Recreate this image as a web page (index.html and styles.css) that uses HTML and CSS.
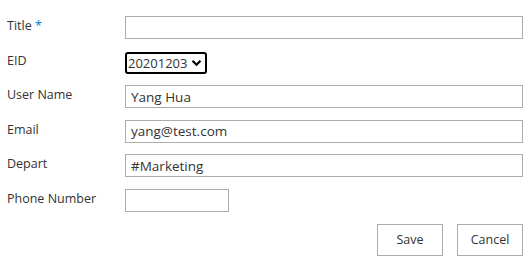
FILE: index.html
```html
<!DOCTYPE html>
<html lang="en">
<head>
    <meta charset="UTF-8">
    <meta name="viewport" content="width=device-width, initial-scale=1.0">
    <title>New Item</title>
    <link rel="stylesheet" href="styles.css">
</head>
<body>
    <form class="item-form">
        <div class="form-row">
            <label class="form-label">Title <span class="required">*</span></label>
            <input class="text-field" type="text" value="">
        </div>
        <div class="form-row">
            <label class="form-label">EID</label>
            <div class="select-box">
                <span>20201203</span>
                <svg class="chevron" width="11" height="8" viewBox="0 0 11 8">
                    <path d="M1.5 1.8 L5.5 5.8 L9.5 1.8" fill="none" stroke="#000" stroke-width="2.2"/>
                </svg>
            </div>
        </div>
        <div class="form-row">
            <label class="form-label">User Name</label>
            <input class="text-field" type="text" value="Yang Hua">
        </div>
        <div class="form-row">
            <label class="form-label">Email</label>
            <input class="text-field" type="text" value="yang@test.com">
        </div>
        <div class="form-row">
            <label class="form-label">Depart</label>
            <input class="text-field" type="text" value="#Marketing">
        </div>
        <div class="form-row">
            <label class="form-label">Phone Number</label>
            <input class="text-field short" type="text" value="">
        </div>
        <div class="form-actions">
            <button type="button" class="action-btn">Save</button>
            <button type="button" class="action-btn">Cancel</button>
        </div>
    </form>
</body>
</html>
```

FILE: styles.css
```css
body {
    margin: 0;
    font-family: "Open Sans", "Noto Sans", sans-serif;
    font-size: 12.5px;
    color: #333;
    background: #fff;
}
.item-form {
    width: 523px;
    padding: 16px 0 0 7px;
    box-sizing: border-box;
}
.form-row {
    display: flex;
    align-items: flex-start;
    height: 23px;
    margin-bottom: 11.6px;
}
.form-label {
    width: 118px;
    flex-shrink: 0;
    line-height: 18px;
    padding-top: 1px;
}
.required {
    color: #0078d4;
}
.text-field {
    flex: 1;
    height: 23px;
    box-sizing: border-box;
    margin: 0;
    padding: 0 5px;
    border: 1px solid #ababab;
    border-radius: 0;
    font-family: inherit;
    font-size: 13.5px;
    color: #333;
    outline: none;
}
.text-field.short {
    flex: none;
    width: 104px;
}
.select-box {
    display: flex;
    align-items: center;
    gap: 4px;
    height: 22px;
    margin-top: 1px;
    box-sizing: border-box;
    padding: 0 3px 0 1px;
    border: 2px solid #000;
    border-radius: 3px;
    font-size: 13px;
    color: #333;
}
.chevron {
    margin-top: 1px;
}
.form-actions {
    display: flex;
    justify-content: flex-end;
    gap: 14px;
    margin-top: 3px;
}
.action-btn {
    width: 66px;
    height: 32px;
    padding: 0;
    border: 1px solid #ababab;
    background: #fff;
    font-family: inherit;
    font-size: 12.5px;
    color: #333;
}
```
